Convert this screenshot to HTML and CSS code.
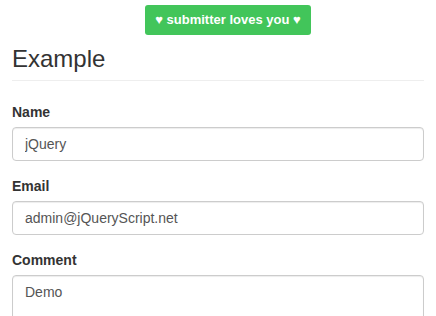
FILE: index.html
```html
<!DOCTYPE html>
<html>
<head>
<meta charset="utf-8">
<link rel="stylesheet" href="styles.css">
</head>
<body>
<div class="top">
  <a class="love">♥ submitter loves you ♥</a>
</div>
<div class="container">
  <div class="page-header"><h1>Example</h1></div>
  <form class="form">
    <div class="form-group">
      <label>Name</label>
      <input class="form-control" type="text" value="jQuery">
    </div>
    <div class="form-group">
      <label>Email</label>
      <input class="form-control" type="text" value="admin@jQueryScript.net">
    </div>
    <div class="form-group">
      <label>Comment</label>
      <textarea class="form-control textarea" rows="4">Demo</textarea>
    </div>
  </form>
</div>
</body>
</html>
```
FILE: styles.css
```css
html, body {
  margin: 0;
  padding: 0;
  background: #fff;
  overflow: hidden;
}
body {
  font-family: "Liberation Sans", Arial, sans-serif;
  font-size: 14px;
  line-height: 1.42857;
  color: #333;
}
.top {
  display: flex;
  justify-content: center;
  padding-top: 5px;
  padding-left: 20px;
}
.love {
  display: inline-block;
  background: #42c55a;
  color: #fff;
  font-weight: bold;
  font-size: 13px;
  line-height: 18px;
  padding: 6px 10px;
  border-radius: 3px;
  text-decoration: none;
}
.container {
  padding: 0 12px;
}
.page-header {
  margin-top: 11px;
  padding-bottom: 8px;
  border-bottom: 1px solid #eee;
  margin-bottom: 21px;
}
.page-header h1 {
  margin: 0;
  font-size: 24px;
  font-weight: normal;
  line-height: 1.1;
  color: #333;
}
.form-group {
  margin-bottom: 15px;
}
.form-group label {
  display: block;
  font-weight: bold;
  padding-top: 1px;
  margin-bottom: 4px;
}
.form-control {
  display: block;
  box-sizing: border-box;
  width: 100%;
  height: 34px;
  padding: 6px 12px;
  font-family: "Liberation Sans", Arial, sans-serif;
  font-size: 14px;
  line-height: 1.42857;
  color: #555;
  background: #fff;
  border: 1px solid #ccc;
  border-radius: 4px;
  box-shadow: inset 0 1px 1px rgba(0,0,0,.075);
  margin: 0;
}
.textarea {
  height: 100px;
  padding-top: 7px;
  resize: vertical;
}
```
